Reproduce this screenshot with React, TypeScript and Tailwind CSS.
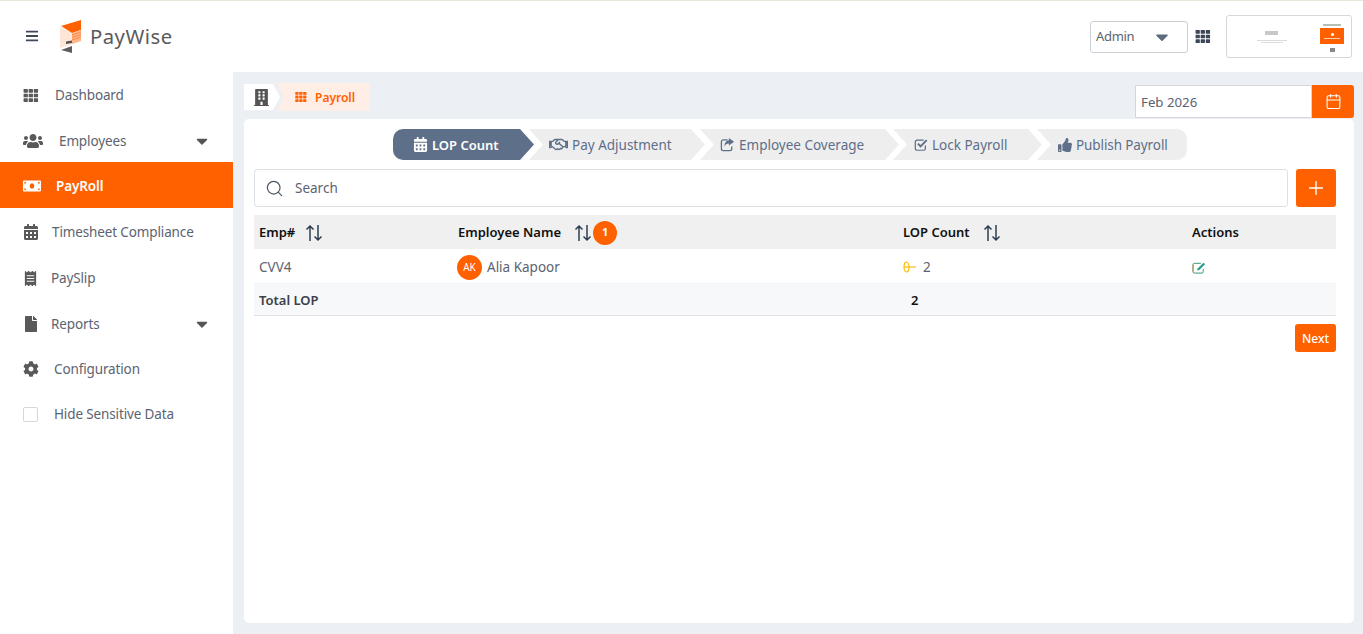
import { useState, type ReactNode } from 'react';
import { Calendar, Plus, Search } from 'lucide-react';
import {
  FaBars,
  FaBuilding,
  FaCalendarAlt,
  FaCaretDown,
  FaCog,
  FaFile,
  FaMoneyBill,
  FaReceipt,
  FaRegHandshake,
  FaThumbsUp,
  FaUsers,
} from 'react-icons/fa';

function Grid3({ className }: { className?: string }) {
  return (
    <svg viewBox="0 0 16 14" className={className} fill="currentColor">
      {[0, 5.5, 11].map((x) =>
        [0, 5, 10].map((y) => <rect key={`${x}-${y}`} x={x} y={y} width="4.6" height="4" rx="0.5" />),
      )}
    </svg>
  );
}

function SortArrows() {
  return (
    <svg viewBox="0 0 18 18" className="h-[18px] w-[18px] text-[#2c3e50]" fill="none" stroke="currentColor" strokeWidth="1.5">
      <path d="M5 17V2M1.5 5.5 5 2l3.5 3.5" />
      <path d="M13 1v15M9.5 12.5 13 16l3.5-3.5" />
    </svg>
  );
}

function Logo() {
  return (
    <svg viewBox="0 0 24 36" className="h-[36px] w-[24px]">
      <path d="M1 8 L13 14 V25 L1 29 Z" fill="#fde6d8" />
      <path d="M2 7 L22 1 V11 L13 14 Z" fill="#ff6000" />
      <path d="M13 14 L22 11 V22 L13 25 Z" fill="#ffb48a" />
      <path d="M13 16 L22 13 M13 18.5 L22 15.5 M13 21 L22 18" stroke="#ff8a45" strokeWidth="1" />
      <path d="M7 22.5 L13 21.5 V24 L7 25 Z" fill="#555" />
      <path d="M13 27 V34 L2 31 Z" fill="#5d5d5d" />
    </svg>
  );
}

function ShareSquare() {
  return (
    <svg viewBox="0 0 16 16" className="h-[15px] w-[15px]" fill="none" stroke="currentColor">
      <path d="M8 3H3.5A2 2 0 0 0 1.5 5v7.5a2 2 0 0 0 2 2h7a2 2 0 0 0 2-2V10" strokeWidth="1.4" />
      <path d="M9.5 1 15 5l-5.5 4V6.8C7 6.8 5.5 7.8 5 10.5 4.6 6.5 6.5 3.8 9.5 3.5Z" fill="currentColor" stroke="none" />
    </svg>
  );
}

function CheckSquare() {
  return (
    <svg viewBox="0 0 16 16" className="h-[14px] w-[14px]" fill="none" stroke="currentColor">
      <path d="M13 8.5v3.5a2 2 0 0 1-2 2H3.5a2 2 0 0 1-2-2V4.5a2 2 0 0 1 2-2H11" strokeWidth="1.4" />
      <path d="M4.5 6.5 7.5 9.5 14.5 2.5" strokeWidth="2.2" />
    </svg>
  );
}

function EditIcon() {
  return (
    <svg viewBox="0 0 16 14" className="h-[13px] w-[15px]" fill="none">
      <path d="M9.5 2.5H2.5A1.5 1.5 0 0 0 1 4v7.5A1.5 1.5 0 0 0 2.5 13h8a1.5 1.5 0 0 0 1.5-1.5V8.5" stroke="#2a8f70" strokeWidth="1" />
      <path d="M1 4v7.5" stroke="#b89a4a" strokeWidth="1" />
      <path d="M6 8 12.2 1.8l1.8 1.8L7.8 9.8 5.5 10.3Z" fill="#2a9d8f" />
    </svg>
  );
}

type NavItem = {
  label: string;
  icon: ReactNode;
  slot: string;
  row: string;
  caret?: boolean;
  active?: boolean;
};

const navItems: NavItem[] = [
  { label: 'Dashboard', icon: <Grid3 className="h-[13px] w-[16px]" />, slot: 'w-[32px]', row: 'h-[44px] pt-[2px]' },
  { label: 'Employees', icon: <FaUsers size={20} />, slot: 'w-[36px]', row: 'h-[46px] pt-[4px]', caret: true },
  { label: 'PayRoll', icon: <FaMoneyBill size={18} />, slot: 'w-[33px]', row: 'h-[46px] pt-[2px]', active: true },
  { label: 'Timesheet Compliance', icon: <FaCalendarAlt size={16} />, slot: 'w-[29px]', row: 'h-[46px] pt-[2px]' },
  { label: 'PaySlip', icon: <FaReceipt size={15} />, slot: 'w-[28px]', row: 'h-[46px] pt-[2px]' },
  { label: 'Reports', icon: <FaFile size={16} />, slot: 'w-[28px]', row: 'h-[46px] pt-[2px]', caret: true },
  { label: 'Configuration', icon: <FaCog size={16} />, slot: 'w-[31px]', row: 'h-[42px] pt-[4px]' },
];

function Sidebar() {
  const [hide, setHide] = useState(false);
  return (
    <aside className="w-[233px] shrink-0 bg-white">
      {navItems.map((item) => (
        <div
          key={item.label}
          className={`flex items-center pl-[23px] pr-[22px] text-[13.5px] tracking-[-0.13px] ${item.row} ${
            item.active ? 'bg-[#ff6000] font-semibold text-white' : 'text-[#5c6370]'
          }`}
        >
          <span className={`flex shrink-0 ${item.slot} ${item.active ? 'text-white' : 'text-[#595959]'}`}>{item.icon}</span>
          <span className="flex-1">{item.label}</span>
          {item.caret && <FaCaretDown size={18} className="text-[#555]" />}
        </div>
      ))}
      <label className="flex h-[48px] items-center pl-[23px] pt-[4px] text-[13.5px] tracking-[-0.13px] text-[#5c6370]">
        <input
          type="checkbox"
          checked={hide}
          onChange={() => setHide(!hide)}
          className="h-[15px] w-[15px] appearance-none rounded-[2px] border border-[#d5d7db] bg-white"
        />
        <span className="ml-[16px]">Hide Sensitive Data</span>
      </label>
    </aside>
  );
}

function Header() {
  return (
    <header className="flex h-[71px] items-center bg-white pl-[25px] pr-[11px]">
      <FaBars size={14} className="-mt-[1px] text-[#3e4a59]" />
      <div className="ml-[20px]"><Logo /></div>
      <span className="mb-[1px] ml-[7px] text-[20.25px] tracking-[0.5px] text-[#5a5a5a]">PayWise</span>
      <div className="ml-auto flex items-center">
        <div className="flex h-[32px] w-[98px] items-center rounded-[3px] border border-[#ccd0d6] pl-[5px] pr-[15px] pt-[1px] text-[13px] tracking-[-0.3px] text-[#5c6370]">
          Admin
          <FaCaretDown size={20} className="ml-auto text-[#5d6b7c]" />
        </div>
        <Grid3 className="ml-[7px] h-[13px] w-[16px] text-[#3c4654]" />
        <div className="ml-[15px] flex h-[43px] w-[126px] items-center rounded-[3px] border border-[#d5d7db] pl-[29px]">
          <div className="flex w-[31px] flex-col items-center gap-[5px]">
            <div className="h-[4px] w-[13px] bg-[#c8c8c8]" />
            <div className="flex flex-col items-center gap-[1px]">
              <div className="h-[1px] w-[30px] bg-[#dcdcdc]" />
              <div className="h-[1px] w-[22px] bg-[#dcdcdc]" />
            </div>
          </div>
          <div className="ml-[33px] mt-[2px] flex flex-col items-center gap-[2px]">
            <div className="h-[2px] w-[18px] bg-[#b5c0b5]" />
            <div className="flex h-[16px] w-[24px] flex-col items-center justify-center gap-[2px] bg-[#ff6000]">
              <div className="h-[3px] w-[3px] rounded-full bg-white" />
              <div className="h-[1px] w-[16px] bg-[#ffd0b0]" />
            </div>
            <div className="mt-[2px] h-[4px] w-[5px] bg-[#888]" />
          </div>
        </div>
      </div>
    </header>
  );
}

function Stepper() {
  return (
    <div className="flex h-[31px] pl-[139px] text-[13.5px] text-[#5e6f8a]">
      <div className="z-10 flex w-[141px] items-center rounded-l-[10px] bg-[#5e6f8a] pl-[20px] pt-[2px] text-[13px] font-semibold text-white [clip-path:polygon(0_0,calc(100%-14px)_0,100%_50%,calc(100%-14px)_100%,0_100%)]">
        <FaCalendarAlt size={15} className="-mt-[2px]" />
        <span className="ml-[4px]">LOP Count</span>
      </div>
      <div className="-ml-[5px] flex w-[176px] items-center bg-[#eeeeee] pl-[20px] pt-[2px] [clip-path:polygon(0_0,calc(100%-14px)_0,100%_50%,calc(100%-14px)_100%,0_100%,14px_50%)]">
        <FaRegHandshake size={19} className="-mt-[2px]" />
        <span className="ml-[4px]">Pay Adjustment</span>
      </div>
      <div className="-ml-[5px] flex w-[199px] items-center bg-[#eeeeee] pl-[20px] pt-[2px] [clip-path:polygon(0_0,calc(100%-14px)_0,100%_50%,calc(100%-14px)_100%,0_100%,14px_50%)]">
        <span className="-mt-[2px] flex"><ShareSquare /></span>
        <span className="ml-[4px]">Employee Coverage</span>
      </div>
      <div className="-ml-[6px] flex w-[149px] items-center bg-[#eeeeee] pl-[21px] pt-[2px] [clip-path:polygon(0_0,calc(100%-14px)_0,100%_50%,calc(100%-14px)_100%,0_100%,14px_50%)]">
        <span className="-mt-[2px] flex"><CheckSquare /></span>
        <span className="ml-[4px]">Lock Payroll</span>
      </div>
      <div className="-ml-[5px] flex w-[150px] items-center rounded-r-[10px] bg-[#eeeeee] pl-[21px] pt-[2px] tracking-[-0.1px] [clip-path:polygon(0_0,100%_0,100%_100%,0_100%,14px_50%)]">
        <FaThumbsUp size={14} className="-mt-[2px]" />
        <span className="ml-[4px]">Publish Payroll</span>
      </div>
    </div>
  );
}

const COLS = 'grid grid-cols-[199px_445px_289px_149px]';

function LopTable() {
  return (
    <div className="mt-[8px] text-[13px]">
      <div className={`${COLS} h-[34px] items-center bg-[#f0f0f0] pt-[1px] font-semibold text-[#111]`}>
        <div className="flex items-center pl-[5px]">
          Emp#
          <span className="ml-[10px] flex"><SortArrows /></span>
        </div>
        <div className="flex items-center pl-[5px]">
          Employee Name
          <span className="ml-[13px] flex"><SortArrows /></span>
          <span className="ml-[1px] flex h-[24px] w-[24px] items-center justify-center rounded-full bg-[#ff6000] text-[11px] font-bold text-white">1</span>
        </div>
        <div className="flex items-center pl-[5px]">
          LOP Count
          <span className="ml-[13px] flex"><SortArrows /></span>
        </div>
        <div className="pl-[5px]">Actions</div>
      </div>
      <div className={`${COLS} h-[35px] items-center border-b border-[#f1f2f4] bg-white pt-[2px] text-[13.5px] text-[#5c6370]`}>
        <div className="pl-[5px]">CVV4</div>
        <div className="flex items-center pl-[4px]">
          <span className="flex h-[25px] w-[25px] items-center justify-center rounded-full bg-[#ff6000] text-[10px] text-white">AK</span>
          <span className="ml-[5px]">Alia Kapoor</span>
        </div>
        <div className="flex items-center pl-[5px]">
          <svg viewBox="0 0 13 12" className="h-[12px] w-[13px]" fill="none" stroke="#fbbc05" strokeWidth="1.2">
            <ellipse cx="3.5" cy="6" rx="2.5" ry="5" />
            <path d="M1 6h12" />
          </svg>
          <span className="ml-[7px]">2</span>
        </div>
        <div className="pl-[5px]"><EditIcon /></div>
      </div>
      <div className={`${COLS} h-[32px] items-center border-b border-[#dfe1e5] bg-[#f7f8fa] pt-[3px] font-semibold`}>
        <div className="pl-[5px] text-[#3c4048]">Total LOP</div>
        <div />
        <div className="pl-[13px] text-[#111]">2</div>
        <div />
      </div>
    </div>
  );
}

export default function App() {
  return (
    <div className="flex h-[634px] w-[1363px] flex-col overflow-hidden border-t border-t-[#e9e7dc] bg-white font-['Noto_Sans','Open_Sans',sans-serif]">
      <Header />
      <div className="flex min-h-0 flex-1">
        <Sidebar />
        <main className="flex min-w-0 flex-1 flex-col bg-[#eceff4] pb-[11px] pl-[11px] pr-[9px] pt-[11px]">
          <div className="flex h-[36px] items-start justify-between">
            <div className="flex h-[28px]">
              <div className="mt-[1px] flex h-[26px] w-[36px] items-center bg-white pl-[9px] text-[#555] [clip-path:polygon(0_0,calc(100%-7px)_0,100%_50%,calc(100%-7px)_100%,0_100%)]">
                <FaBuilding size={17} />
              </div>
              <div className="-ml-[3px] flex h-[28px] w-[93px] items-center bg-[#ffeee5] pl-[18px] pt-[2px] text-[12px] font-semibold text-[#ff6000] [clip-path:polygon(0_0,100%_0,100%_100%,0_100%,7px_50%)]">
                <Grid3 className="-mt-[2px] h-[10px] w-[12px]" />
                <span className="ml-[8px]">Payroll</span>
              </div>
            </div>
            <div className="mt-[2px] flex h-[33px]">
              <div className="flex w-[177px] items-center border border-[#d3d6db] bg-white pl-[5px] pt-[2px] text-[13.25px] text-[#5c6370]">Feb 2026</div>
              <div className="flex w-[42px] items-center justify-center rounded-r-[3px] bg-[#ff6000] text-white">
                <Calendar size={17} strokeWidth={1.5} />
              </div>
            </div>
          </div>
          <section className="flex-1 rounded-[5px] bg-white pl-[10px] pr-[18px] pt-[10px]">
            <Stepper />
            <div className="mt-[9px] flex gap-[8px]">
              <div className="flex h-[38px] w-[1034px] items-center rounded-[3px] border border-[#dfe0e6] pl-[10px] pt-[1px] text-[13.5px] text-[#5c6370]">
                <Search size={19} strokeWidth={1.5} className="text-[#4a5563]" />
                <span className="ml-[11px]">Search</span>
              </div>
              <div className="flex h-[38px] w-[40px] items-center justify-center rounded-[3px] bg-[#ff6000] text-white">
                <Plus size={22} strokeWidth={1.5} />
              </div>
            </div>
            <LopTable />
            <div className="mt-[8px] flex justify-end">
              <div className="flex h-[28px] w-[41px] items-center justify-center rounded-[3px] bg-[#ff6000] pt-[2px] text-[12px] font-medium text-white">Next</div>
            </div>
          </section>
        </main>
      </div>
    </div>
  );
}
